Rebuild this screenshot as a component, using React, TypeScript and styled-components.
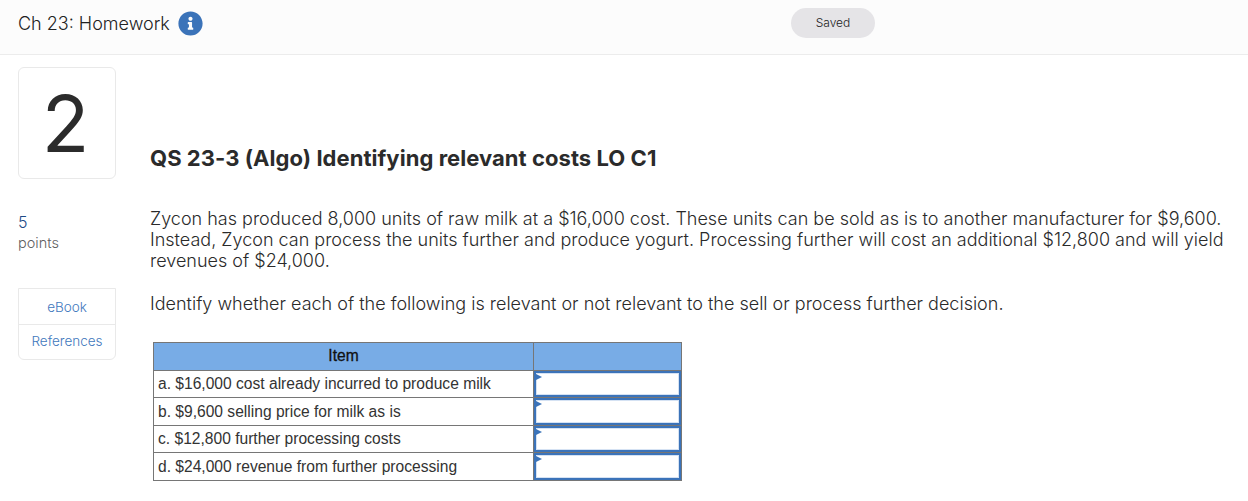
import React from 'react'
import styled, { createGlobalStyle } from 'styled-components'
import { FaInfoCircle } from 'react-icons/fa'

const colors = {
  text: '#2b2b2b',
  grey: '#5f5f5f',
  line: '#e9e9e9',
  blue: '#3b73b9',
  link: '#3f78bd',
  tableLine: '#767676',
  tableHead: '#78ace6',
}

const Global = createGlobalStyle`
  html, body { margin: 0; padding: 0; background: #fff; }
  body { font-family: Inter, "Open Sans", sans-serif; color: ${colors.text}; }
`

const Page = styled.div`
  width: 1248px;
  height: 501px;
  overflow: hidden;
`
const Header = styled.header`
  height: 54px;
  background: #fcfcfc;
  border-bottom: 1px solid #ececec;
  display: flex;
  align-items: center;
  padding-left: 18px;
`
const Title = styled.div`
  font-size: 18px;
  font-weight: 300;
  color: #222;
  width: 152px;
  white-space: nowrap;
  margin-right: 8px;
  padding-bottom: 7px;
`
const InfoIcon = styled(FaInfoCircle)`
  color: ${colors.blue};
  width: 25px;
  height: 25px;
  margin-bottom: 8px;
`
const SavedSlot = styled.div`
  margin-left: 588px;
  margin-bottom: 8px;
`
const SavedPill = styled.div`
  box-sizing: border-box;
  width: 84px;
  height: 30px;
  padding-bottom: 1px;
  border-radius: 15px;
  background: #e5e4e7;
  font-size: 12px;
  font-weight: 300;
  color: #222;
  display: flex;
  align-items: center;
  justify-content: center;
`
const Body = styled.div`
  display: flex;
  padding: 12px 0 0 18px;
`
const Side = styled.aside`
  width: 98px;
  flex-shrink: 0;
`
const NumberCard = styled.div`
  box-sizing: border-box;
  width: 98px;
  height: 112px;
  padding-right: 3px;
  border: 1px solid ${colors.line};
  border-radius: 6px;
  display: flex;
  align-items: center;
  justify-content: center;
  font-size: 78px;
  font-weight: 400;
  color: ${colors.text};
`
const Points = styled.div`
  margin-top: 33px;
  font-size: 14.5px;
  font-weight: 300;
  line-height: 20px;
  color: ${colors.grey};
`
const PointsValue = styled.div`
  font-size: 16px;
  line-height: 21px;
  color: #1d4a86;
`
const LinkBox = styled.div`
  box-sizing: border-box;
  margin-top: 35px;
  border: 1px solid ${colors.line};
  border-radius: 0 0 6px 6px;
`
const LinkItem = styled.div<{ $divider?: boolean }>`
  box-sizing: border-box;
  height: ${p => (p.$divider ? 36 : 34)}px;
  padding-bottom: ${p => (p.$divider ? 0 : 2)}px;
  display: flex;
  align-items: center;
  justify-content: center;
  font-size: 13.5px;
  font-weight: 300;
  color: ${colors.link};
  border-bottom: ${p => (p.$divider ? `1px solid ${colors.line}` : 'none')};
`
const Main = styled.main`
  margin-left: 34px;
  flex: 1;
`
const Heading = styled.h1`
  margin: 77px 0 0;
  font-size: 22px;
  letter-spacing: 0.05px;
  line-height: 28px;
  font-weight: 700;
  white-space: nowrap;
  color: ${colors.text};
`
const Para = styled.p`
  margin: 36px 0 0;
  font-size: 18px;
  font-weight: 300;
  line-height: 21px;
  white-space: nowrap;
  color: #2a2a2a;
`
const Para2 = styled(Para)`
  margin-top: 22px;
`
const Table = styled.table`
  margin: 28px 0 0 3px;
  width: 528px;
  border-collapse: collapse;
  table-layout: fixed;
  font-family: "Liberation Sans", Arial, sans-serif;
  font-size: 15.6px;
`
const HeadCell = styled.th`
  background: ${colors.tableHead};
  border: 1px solid ${colors.tableLine};
  height: 26px;
  padding: 0 0 1px;
  font-weight: 400;
  color: #111;
  -webkit-text-stroke: 0.3px #111;
`
const ItemCell = styled.td<{ $h: number }>`
  border: 1px solid ${colors.tableLine};
  height: ${p => p.$h}px;
  padding: 0 0 0 4px;
  color: #333;
`
const InputCell = styled.td`
  border: 1px solid ${colors.tableLine};
  padding: 0;
  position: relative;
`
const InputBox = styled.div<{ $h: number }>`
  box-sizing: border-box;
  height: ${p => p.$h}px;
  border: 2px solid ${colors.blue};
  box-shadow: inset 0 0 0 1px #d5e2f3;
  background: #fff;
`
const Flag = styled.span`
  position: absolute;
  left: 0;
  top: 2px;
  width: 0;
  height: 0;
  border-left: 8px solid ${colors.blue};
  border-top: 4.5px solid transparent;
  border-bottom: 4.5px solid transparent;
`

const items = [
  { label: 'a. $16,000 cost already incurred to produce milk', h: 26 },
  { label: 'b. $9,600 selling price for milk as is', h: 27 },
  { label: 'c. $12,800 further processing costs', h: 26 },
  { label: 'd. $24,000 revenue from further processing', h: 27 },
]

export default function App() {
  return (
    <Page>
      <Global />
      <Header>
        <Title>Ch 23: Homework</Title>
        <InfoIcon />
        <SavedSlot>
          <SavedPill>Saved</SavedPill>
        </SavedSlot>
      </Header>
      <Body>
        <Side>
          <NumberCard>2</NumberCard>
          <Points>
            <PointsValue>5</PointsValue>
            points
          </Points>
          <LinkBox>
            <LinkItem $divider>eBook</LinkItem>
            <LinkItem>References</LinkItem>
          </LinkBox>
        </Side>
        <Main>
          <Heading>QS 23-3 (Algo) Identifying relevant costs LO C1</Heading>
          <Para>
            Zycon has produced 8,000 units of raw milk at a $16,000 cost. These units can be sold as is to another manufacturer for $9,600.
            <br />
            Instead, Zycon can process the units further and produce yogurt. Processing further will cost an additional $12,800 and will yield
            <br />
            revenues of $24,000.
          </Para>
          <Para2>Identify whether each of the following is relevant or not relevant to the sell or process further decision.</Para2>
          <Table>
            <colgroup>
              <col width={380} />
              <col width={148} />
            </colgroup>
            <thead>
              <tr>
                <HeadCell>Item</HeadCell>
                <HeadCell />
              </tr>
            </thead>
            <tbody>
              {items.map(item => (
                <tr key={item.label}>
                  <ItemCell $h={item.h}>{item.label}</ItemCell>
                  <InputCell>
                    <InputBox $h={item.h} />
                    <Flag />
                  </InputCell>
                </tr>
              ))}
            </tbody>
          </Table>
        </Main>
      </Body>
    </Page>
  )
}
